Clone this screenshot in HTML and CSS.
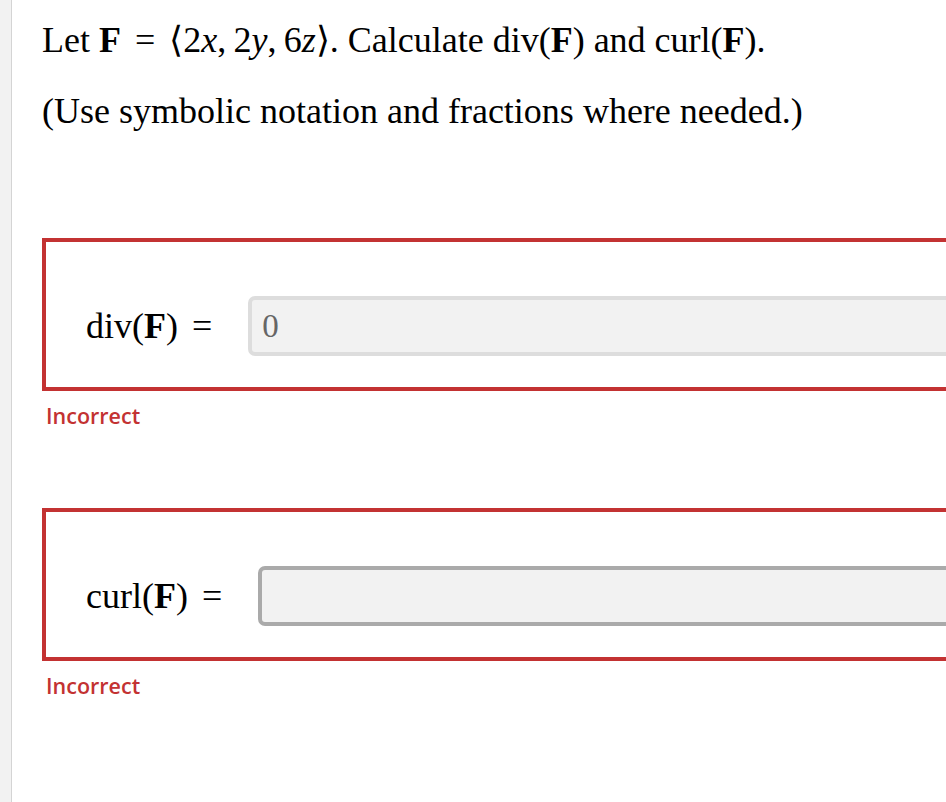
FILE: index.html
```html
<!DOCTYPE html>
<html lang="en">
<head>
	<meta charset="UTF-8">
	<title>div and curl</title>
	<link rel="stylesheet" href="styles.css">
</head>
<body>
	<div class="page">
		<div class="rail"></div>
		<div class="content">
			<p class="question">Let <b>F</b> <span class="op">=</span> ⟨2<i>x</i>,&thinsp;2<i>y</i>,&thinsp;6<i>z</i>⟩. Calculate div(<b>F</b>) and curl(<b>F</b>).</p>
			<p class="hint">(Use symbolic notation and fractions where needed.)</p>

			<div class="answer">
				<div class="box">
					<span class="label">div(<b>F</b>) <span class="op">=</span></span>
					<div class="field filled">0</div>
				</div>
				<div class="status">Incorrect</div>
			</div>

			<div class="answer">
				<div class="box">
					<span class="label">curl(<b>F</b>) <span class="op">=</span></span>
					<div class="field empty"></div>
				</div>
				<div class="status">Incorrect</div>
			</div>
		</div>
	</div>
</body>
</html>
```

FILE: styles.css
```css
html,body{ margin: 0; padding: 0; background: #fff; overflow: hidden; }

.page{ display: flex; min-height: 802px; }
.rail{ width: 11px; flex: none; background: #f2f2f2; border-right: 1px solid #d4d4d4; }
.content{ flex: 1; padding-left: 30px; font-family: "Liberation Serif", "Times New Roman", serif; color: #000; }

.question{ margin: 18px 0 0; font-size: 36px; line-height: 44px; }
.hint{ margin: 27px 0 0; font-size: 36px; line-height: 44px; }
.op{ padding: 0 5px; }

.answer{ margin-top: 105px; }
.answer + .answer{ margin-top: 80px; }
.box{ width: 1000px; box-sizing: border-box; border: 4px solid #c33232;
	padding: 54px 0 31px 40px; display: flex; align-items: center; }
.label{ font-size: 36px; margin-right: 31px; white-space: nowrap; }
.field{ flex: 1; height: 52px; border: 4px solid #ddd; border-radius: 7px; background: #f2f2f2;
	font-size: 33px; line-height: 52px; padding-left: 10px; color: #666; }
.field.empty{ border-color: #aaa; }

.status{ margin: 13px 0 0 4px; font-family: "Open Sans", sans-serif; font-weight: 600;
	font-size: 21.5px; color: #c33232; line-height: 24px; }
```
